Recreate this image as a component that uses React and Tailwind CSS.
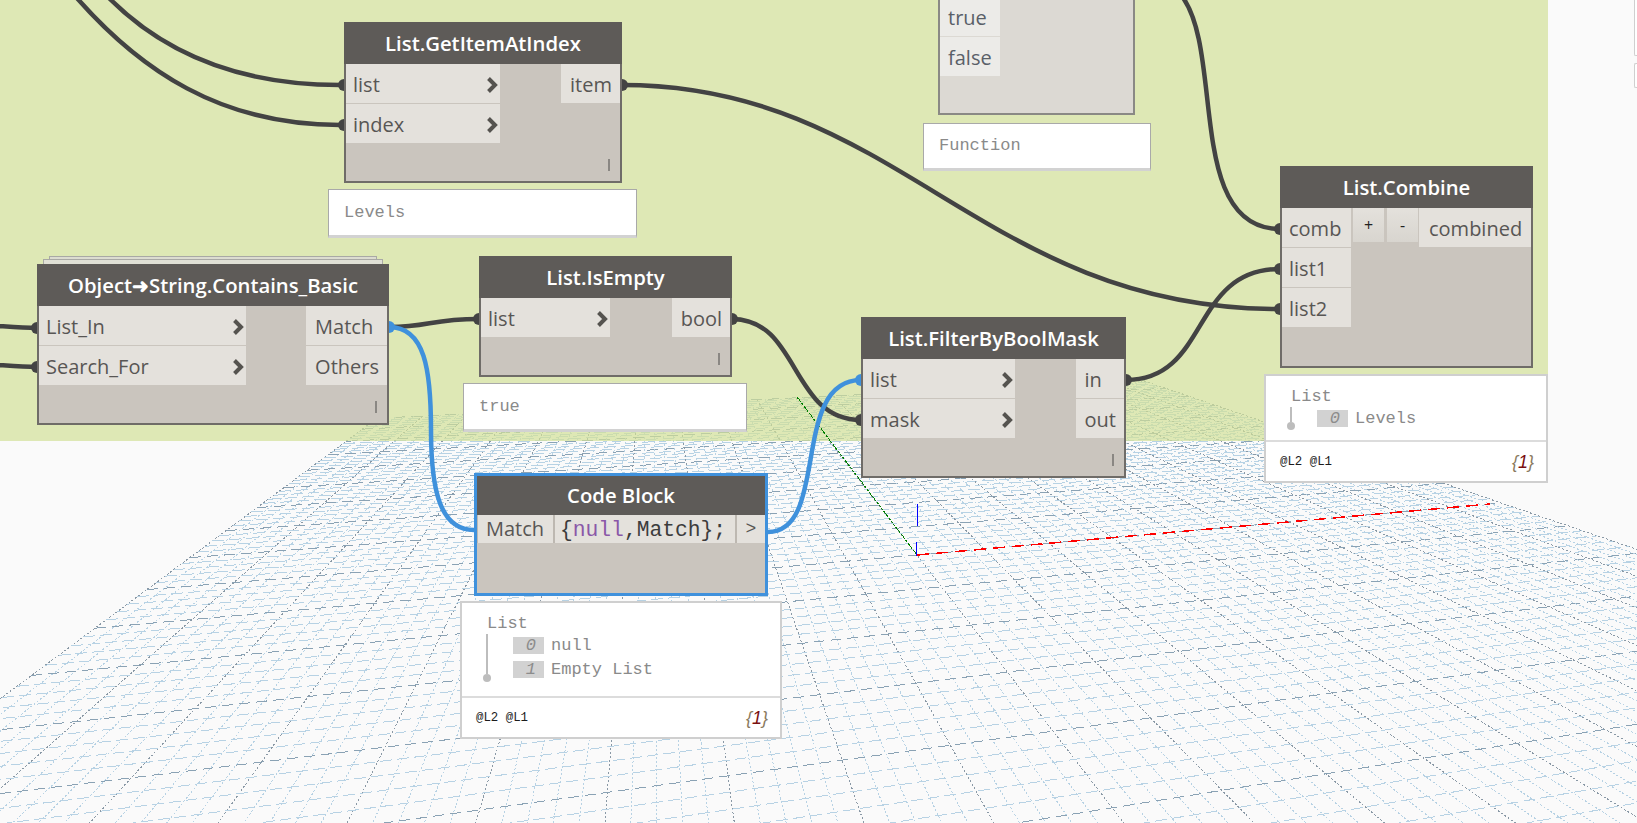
// App.jsx - node graph canvas on top of a perspective background grid
import React from "react";

const STEPS = 10;
const SUB = 5;
const NEAR = 8; // past this the near lines run behind the camera

// plane coords -> screen coords (fitted on the reference axes)
const project = (X, Z) => {
  const w = 1 + 0.0169 * X - 0.085 * Z;
  return [(917 + 83.8 * X - 55.5 * Z) / w, (555 + 3.3 * X - 18.1 * Z) / w];
};

const gridLines = () => {
  const lines = [];
  for (let i = -STEPS * SUB; i <= STEPS * SUB; i++) {
    const v = i / SUB;
    const major = i % SUB === 0;
    const [cx, cy] = project(v, -STEPS);
    const [dx, dy] = project(v, NEAR);
    lines.push(
      <line
        key={`b${i}`}
        x1={cx}
        y1={cy}
        x2={dx}
        y2={dy}
        stroke={major ? "#8a99a6" : "#b7d2e4"}
        strokeDasharray="2 2"
      />
    );
    if (v > NEAR) continue;
    const [ax, ay] = project(-STEPS, v);
    const [bx, by] = project(STEPS, v);
    lines.push(
      <line
        key={`a${i}`}
        x1={ax}
        y1={ay}
        x2={bx}
        y2={by}
        stroke={major ? "#8aa2b4" : "#b7d2e4"}
        strokeDasharray={major ? "11 6" : "12 5"}
      />
    );
  }
  return lines;
};

const Chevron = () => (
  <svg width="12" height="16" viewBox="0 0 12 16" className="shrink-0">
    <path d="M2.5 1.5 L9 8 L2.5 14.5" fill="none" stroke="#55534f" strokeWidth="4" />
  </svg>
);

const Cell = ({ children, className = "" }) => (
  <div className={`h-[39px] pt-[2px] flex items-center bg-[#e4e1dc] ${className}`}>{children}</div>
);

const Node = ({ className, title, inputs, outputs, leftWidth, mark = true }) => (
  <div className={`absolute flex flex-col font-['Open_Sans',sans-serif] text-[20px] text-[#585654] ${className}`}>
    <div className="h-[42px] pt-px flex items-center justify-center bg-[#5e5b58] text-white text-[20.3px] font-semibold">
      {title}
    </div>
    <div className="flex flex-col bg-[#cac5be] border-x-2 border-b-2 border-[#6f6c68]">
      <div className="flex justify-between">
        <div className={`flex flex-col gap-px ${leftWidth}`}>
          {inputs.map((name) => (
            <Cell key={name} className="justify-between pl-[7px] pr-[2px]">
              <span>{name}</span>
              <Chevron />
            </Cell>
          ))}
        </div>
        <div className="flex flex-col gap-px">
          {outputs.map((name) => (
            <Cell key={name} className="pl-[9px] pr-2">
              {name}
            </Cell>
          ))}
        </div>
      </div>
      <div className="h-[38px] flex items-end justify-end pr-[10px] pb-[10px]">
        {mark && <div className="w-[2px] h-[12px] bg-[#8a8783]"></div>}
      </div>
    </div>
  </div>
);

const Note = ({ className, children }) => (
  <div
    className={`absolute bg-white border border-[#a9a9a9] border-b-[3px] border-b-[#d2d2d2] pl-[15px] flex items-center font-['Liberation_Mono',monospace] text-[17px] text-[#8a8a8a] ${className}`}
  >
    {children}
  </div>
);

const Preview = ({ className, items, treeHeight }) => (
  <div className={`absolute flex flex-col bg-white border-2 border-[#cfcfcf] font-['Liberation_Mono',monospace] ${className}`}>
    <div className="flex-1 pl-[21px] pt-[11px] text-[17px] leading-[20px] text-[#8a8a8a]">
      <div className="pl-[4px]">List</div>
      <div className="flex">
        <div className={`w-[8px] flex flex-col items-center ${treeHeight}`}>
          <div className="flex-1 w-[2px] bg-[#bdbdbd]"></div>
          <div className="w-[8px] h-[8px] rounded-full bg-[#bdbdbd]"></div>
        </div>
        <div className="flex flex-col gap-[7px] pl-[22px] pt-[3px]">
          {items.map(([idx, text]) => (
            <div key={idx} className="flex items-center h-[17px]">
              <div className="w-[31px] h-[17px] bg-[#d2d2d2] flex items-center justify-end pr-[8px] italic text-[#8c8c8c]">
                {idx}
              </div>
              <div className="pl-[7px]">{text}</div>
            </div>
          ))}
        </div>
      </div>
    </div>
    <div className="h-[41px] pt-[2px] border-t-2 border-[#dcdcdc] flex items-center justify-between pl-[14px] pr-[12px]">
      <span className="text-[12.4px] text-[#1c1c1c]">@L2 @L1</span>
      <span className="text-[18px] italic font-['Liberation_Sans',sans-serif] text-[#8a7a60]">
        {"{"}
        <span className="text-[#7a1010]">1</span>
        {"}"}
      </span>
    </div>
  </div>
);

const wires = [
  "M108 -3 C170 60 250 85 340 85",
  "M76 -3 C140 70 220 125 340 125",
  "M622 85 C900 85 980 309 1280 309",
  "M1181 -5 C1225 50 1185 229 1280 229",
  "M-2 326 C12 327 24 328 37 328",
  "M-2 365 C12 366 24 367 37 367",
  "M389 327 C430 327 430 319 479 319",
  "M732 319 C800 319 790 420 861 420",
  "M1126 380 C1210 380 1190 269 1280 269",
];

const blueWires = [
  "M389 327 C425 327 431 370 431 430 C431 490 440 530 474 530",
  "M768 532 C830 532 790 380 861 380",
];

const ports = [
  [344, 85], [344, 125], [622, 85], [1280, 229], [1280, 269], [1280, 309],
  [37, 328], [37, 367], [479, 319], [732, 319], [861, 420], [1126, 380],
];

const App = () => {
  return (
    <div className="relative w-[1637px] h-[823px] overflow-hidden bg-[#fafafa]">
      {/* Background grid */}
      <svg width="1637" height="823" className="absolute inset-0" shapeRendering="crispEdges" strokeWidth="1">
        {gridLines()}
      </svg>

      {/* Workspace tint */}
      <div className="absolute left-0 top-0 w-[1548px] h-[441px] bg-[#d1df97]/70"></div>

      {/* Axes and wires */}
      <svg width="1637" height="823" className="absolute inset-0" fill="none">
        <g shapeRendering="crispEdges">
          <line x1="917" y1="555" x2="797" y2="397" stroke="#008000" strokeWidth="1" strokeDasharray="3 1" />
          <line x1="917" y1="555" x2="1490" y2="504" stroke="#ff0000" strokeWidth="1.5" strokeDasharray="12 7" />
          <line x1="916.5" y1="556" x2="916.5" y2="542" stroke="#0000ff" strokeWidth="1.5" />
          <line x1="917.5" y1="526" x2="917.5" y2="504" stroke="#0000ff" strokeWidth="1.5" />
        </g>
        {wires.map((d) => (
          <path key={d} d={d} stroke="#434343" strokeWidth="4.5" />
        ))}
        {ports.map(([x, y]) => (
          <circle key={`${x}-${y}`} cx={x} cy={y} r="6" fill="#434343" />
        ))}
        {blueWires.map((d) => (
          <path key={d} d={d} stroke="#3f91dc" strokeWidth="4.5" />
        ))}
        <circle cx="389" cy="327" r="6" fill="#3f91dc" />
        <circle cx="861" cy="380" r="6" fill="#3f91dc" />
      </svg>

      {/* Frozen node cut by the top of the view */}
      <div className="absolute left-[938px] top-[-3px] w-[197px] h-[118px] bg-[#dcd9d3] border-x-2 border-b-2 border-[#8a8985] flex flex-col gap-px font-['Open_Sans',sans-serif] text-[20px] text-[#5a5f68]">
        <div className="w-[60px] h-[39px] pl-2 pt-[2px] flex items-center bg-[#ecebe8]">true</div>
        <div className="w-[60px] h-[39px] pl-2 pt-[2px] flex items-center bg-[#ecebe8]">false</div>
      </div>
      <Note className="left-[923px] top-[123px] w-[228px] h-[48px]">Function</Note>

      <Node
        className="left-[344px] top-[22px] w-[278px]"
        title="List.GetItemAtIndex"
        inputs={["list", "index"]}
        outputs={["item"]}
        leftWidth="w-[154px]"
      />
      <Note className="left-[328px] top-[189px] w-[309px] h-[49px]">Levels</Note>

      {/* Custom node: stacked sheets behind it */}
      <div className="absolute left-[49px] top-[256px] w-[328px] h-[10px] bg-[#dcdcd0] border border-[#a9a9a5]"></div>
      <div className="absolute left-[43px] top-[259px] w-[340px] h-[10px] bg-[#e0e0d6] border border-[#a9a9a5]"></div>
      <Node
        className="left-[37px] top-[264px] w-[352px]"
        title="Object➜String.Contains_Basic"
        inputs={["List_In", "Search_For"]}
        outputs={["Match", "Others"]}
        leftWidth="w-[207px]"
      />

      <Node
        className="left-[479px] top-[256px] w-[253px]"
        title="List.IsEmpty"
        inputs={["list"]}
        outputs={["bool"]}
        leftWidth="w-[129px]"
      />
      <Note className="left-[463px] top-[383px] w-[284px] h-[49px]">true</Note>

      <Node
        className="left-[861px] top-[317px] w-[265px]"
        title="List.FilterByBoolMask"
        inputs={["list", "mask"]}
        outputs={["in", "out"]}
        leftWidth="w-[152px]"
      />

      {/* List.Combine has +/- buttons and no chevrons */}
      <div className="absolute left-[1280px] top-[166px] w-[253px] flex flex-col font-['Open_Sans',sans-serif] text-[20px] text-[#585654]">
        <div className="h-[42px] pt-px flex items-center justify-center bg-[#5e5b58] text-white text-[20.3px] font-semibold">
          List.Combine
        </div>
        <div className="flex h-[160px] bg-[#cac5be] border-x-2 border-b-2 border-[#6f6c68]">
          <div className="w-[69px] flex flex-col gap-px">
            {["comb", "list1", "list2"].map((name) => (
              <Cell key={name} className="pl-[7px]">
                {name}
              </Cell>
            ))}
          </div>
          <div className="ml-[2px] w-[31px] h-[34px] flex items-center justify-center bg-gradient-to-b from-[#e4e1dc] to-[#d8d5cf] text-[16px] text-[#222]">
            +
          </div>
          <div className="ml-[3px] w-[31px] h-[34px] flex items-center justify-center bg-gradient-to-b from-[#e4e1dc] to-[#d8d5cf] text-[16px] text-[#222]">
            -
          </div>
          <Cell className="ml-px flex-1 pl-[10px]">combined</Cell>
        </div>
      </div>
      <Preview
        className="left-[1264px] top-[374px] w-[284px] h-[109px]"
        items={[["0", "Levels"]]}
        treeHeight="h-[23px]"
      />

      {/* Selected code block */}
      <div className="absolute left-[474px] top-[473px] w-[294px] h-[123px] flex flex-col border-[3px] border-[#3f91dc] bg-[#cac5be] font-['Open_Sans',sans-serif] text-[20px] text-[#585654]">
        <div className="h-[39px] flex items-center justify-center bg-[#5e5b58] text-white text-[20.3px] font-semibold">
          Code Block
        </div>
        <div className="flex h-[28px] gap-[2px] pl-px bg-[#bdb8b1]">
          <div className="w-[75px] pl-2 flex items-center bg-[#e4e1dc]">Match</div>
          <div className="w-[180px] pl-[5px] pt-[4px] flex items-center bg-[#e4e1dc] font-['Liberation_Mono',monospace] text-[21.3px] text-[#3c3c3c]">
            {"{"}
            <span className="text-[#8a58a8]">null</span>
            {",Match};"}
          </div>
          <div className="flex-1 flex items-center justify-center bg-[#e4e1dc] text-[18px] font-['Liberation_Mono',monospace]">
            &gt;
          </div>
        </div>
      </div>
      <Preview
        className="left-[460px] top-[601px] w-[322px] h-[138px]"
        items={[
          ["0", "null"],
          ["1", "Empty List"],
        ]}
        treeHeight="h-[48px]"
      />

      {/* Clipped widgets at the window's right edge */}
      <div className="absolute right-0 top-0 w-[3px] h-[56px] bg-white border-l border-b border-[#cfcfcf] rounded-bl-[2px]"></div>
      <div className="absolute right-0 top-[63px] w-[3px] h-[25px] bg-white border-l border-y border-[#cfcfcf] rounded-l-[2px]"></div>
    </div>
  );
};

export default App;
